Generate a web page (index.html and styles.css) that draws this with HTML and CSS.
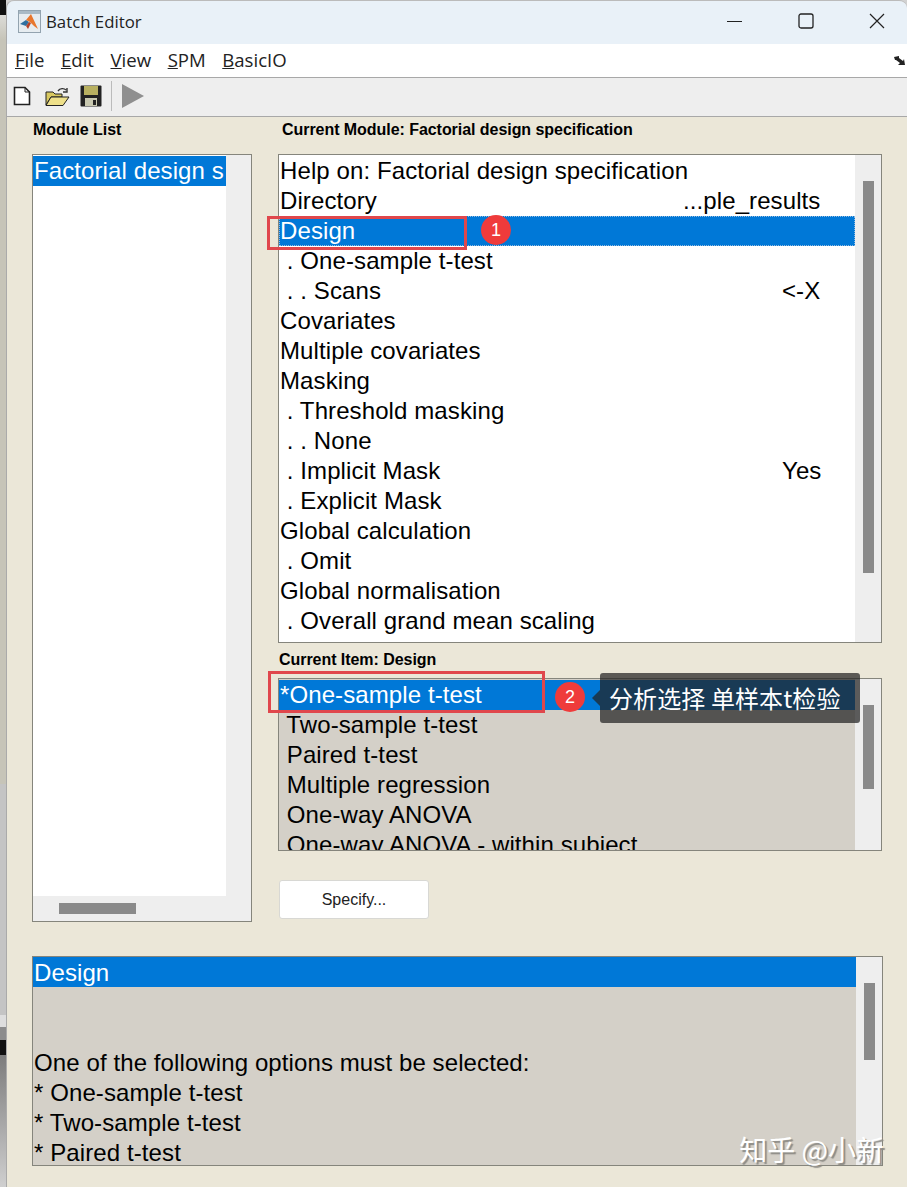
FILE: index.html
```html
<!DOCTYPE html>
<html lang="en">
<head>
  <meta charset="UTF-8">
  <meta name="viewport" content="width=device-width, initial-scale=1.0">
  <title>Batch Editor</title>
  <link rel="stylesheet" href="styles.css">
</head>
<body>
  <div class="strip"></div>
  <div class="window">
    <div class="titlebar">
      <svg class="logo" width="23" height="23" viewBox="0 0 23 23">
        <rect x="0.5" y="0.5" width="22" height="22" fill="#e6ecf0" stroke="#93a3af"/>
        <rect x="1" y="1" width="21" height="3" fill="#a9bac6"/>
        <path d="M2 14 L8 10 L11 12 L8 16 Z" fill="#2f6f9f"/>
        <path d="M8 10 L13 4 L20 19 L16 16 L12 12 Z" fill="#e8772e"/>
        <path d="M8 16 L11 12 L13 13 L10 19 Z" fill="#b5432a"/>
      </svg>
      <span class="title">Batch Editor</span>
      <div class="win-btns">
        <svg width="16" height="16" viewBox="0 0 16 16"><path d="M0 8.5 H15" stroke="#222" fill="none"/></svg>
        <svg width="16" height="16" viewBox="0 0 16 16"><rect x="1" y="1" width="14" height="14" rx="2" stroke="#222" stroke-width="1.3" fill="none"/></svg>
        <svg width="16" height="16" viewBox="0 0 16 16"><path d="M1 1 L15 15 M15 1 L1 15" stroke="#222" stroke-width="1.2" fill="none"/></svg>
      </div>
    </div>

    <div class="menubar">
      <span><u>F</u>ile</span>
      <span><u>E</u>dit</span>
      <span><u>V</u>iew</span>
      <span><u>S</u>PM</span>
      <span><u>B</u>asicIO</span>
      <svg class="menu-arrow" width="11" height="10" viewBox="0 0 11 10"><path d="M0 1 L5 0 L5 2 L9 5 L10 3 L11 9 L4 9 L6 7 L2 4 L1 4 Z" fill="#222"/></svg>
    </div>

    <div class="toolbar">
      <svg width="18" height="20" viewBox="0 0 18 20"><path d="M1.5 1.5 H12 L16.5 6 V18.5 H1.5 Z" fill="#fff" stroke="#222" stroke-width="1.6"/><path d="M12 1.5 V6 H16.5" fill="none" stroke="#222"/></svg>
      <svg class="tool-open" width="25" height="21" viewBox="0 0 25 21"><path d="M1 6 H8 L10 8 H17 V11 H6 L1 19 Z" fill="#d8c860" stroke="#222"/><path d="M6 11 H24 L18 19.5 H1 Z" fill="#eee08a" stroke="#222"/><path d="M13 5 C15 2 19 2 21 4 M18 6 L22 6 L22 2" fill="none" stroke="#333" stroke-width="1.4"/></svg>
      <svg width="22" height="22" viewBox="0 0 22 22"><rect x="0.5" y="0.5" width="21" height="21" rx="1" fill="#222"/><rect x="4" y="1" width="14" height="9" fill="#b8b060"/><rect x="5" y="13" width="12" height="8" fill="#c8c8b0"/><rect x="13" y="15" width="3" height="5" fill="#222"/></svg>
      <span class="tool-sep"></span>
      <svg width="23" height="26" viewBox="0 0 23 26"><path d="M0 1 L22 13 L0 25 Z" fill="#8f8f8f"/></svg>
    </div>

    <div class="main">
      <div class="top-row">
        <div class="col-left">
          <div class="label label-list">Module List</div>
          <div class="box module-box">
            <div class="module-inner">
              <div class="row selected">Factorial design s</div>
            </div>
            <div class="hbar"><div class="hthumb"></div></div>
          </div>
        </div>

        <div class="col-right">
          <div class="label label-module">Current Module: Factorial design specification</div>
          <div class="box module-items">
            <div class="items">
              <div class="row">Help on: Factorial design specification</div>
              <div class="row"><span>Directory</span><span class="val">...ple_results</span></div>
              <div class="row selected focus">Design</div>
              <div class="row"> . One-sample t-test</div>
              <div class="row"><span> . . Scans</span><span class="val short">&lt;-X</span></div>
              <div class="row">Covariates</div>
              <div class="row">Multiple covariates</div>
              <div class="row">Masking</div>
              <div class="row"> . Threshold masking</div>
              <div class="row"> . . None</div>
              <div class="row"><span> . Implicit Mask</span><span class="val short">Yes</span></div>
              <div class="row"> . Explicit Mask</div>
              <div class="row">Global calculation</div>
              <div class="row"> . Omit</div>
              <div class="row">Global normalisation</div>
              <div class="row"> . Overall grand mean scaling</div>
            </div>
            <div class="vbar"><div class="vthumb thumb-items"></div></div>
            <div class="mark mark-one"></div>
            <div class="badge badge-one">1</div>
          </div>

          <div class="label label-item">Current Item: Design</div>
          <div class="box item-box">
            <div class="items gray">
              <div class="row selected">*One-sample t-test</div>
              <div class="row"> Two-sample t-test</div>
              <div class="row"> Paired t-test</div>
              <div class="row"> Multiple regression</div>
              <div class="row"> One-way ANOVA</div>
              <div class="row"> One-way ANOVA - within subject</div>
            </div>
            <div class="vbar"><div class="vthumb thumb-item"></div></div>
            <div class="mark mark-two"></div>
            <div class="badge badge-two">2</div>
            <div class="tip">分析选择 单样本t检验</div>
          </div>

          <div class="btn">Specify...</div>
        </div>
      </div>

      <div class="box help-box">
        <div class="items gray">
          <div class="row selected">Design</div>
          <div class="row"></div>
          <div class="row"></div>
          <div class="row">One of the following options must be selected:</div>
          <div class="row">* One-sample t-test</div>
          <div class="row">* Two-sample t-test</div>
          <div class="row">* Paired t-test</div>
        </div>
        <div class="vbar"><div class="vthumb thumb-help"></div></div>
        <div class="watermark">知乎 @小新</div>
      </div>
    </div>
  </div>
</body>
</html>
```

FILE: styles.css
```css
html, body { margin: 0; padding: 0; }
body { width: 907px; height: 1187px; overflow: hidden; display: flex; background: #d2d2d2; font-family: "Liberation Sans", Arial, sans-serif; color: #000; }

/* bit of the desktop showing left of the window */
.strip { width: 6px; flex: none; background: linear-gradient(to bottom, #111 0, #111 15px, #dcdcd8 15px, #c6c4b8 40px, #c6c4b8 784px, #c4c4c4 784px, #c4c4c4 1015px, #dedede 1015px, #dedede 1027px, #8c8c8c 1027px, #8c8c8c 1040px, #111 1040px, #111 1055px, #7c7c7c 1055px, #cfcfcf 1187px); }

.window { flex: 1; min-width: 0; display: flex; flex-direction: column; border-radius: 8px 8px 0 0; overflow: hidden; border-top: 1px solid #bbb; border-left: 1px solid #aaa; }

.titlebar { height: 43px; flex: none; background: #e9f1f8; display: flex; align-items: center; padding: 0 0 3px 11px; box-sizing: border-box; }
.logo { margin-right: 5px; }
.title { font-family: "Open Sans", sans-serif; font-size: 16.8px; color: #222; }
.win-btns { margin-left: auto; display: flex; align-items: center; gap: 55px; padding-right: 22px; }

.menubar { height: 34px; flex: none; background: #fff; border-bottom: 1px solid #a8a8a8; display: flex; align-items: center; gap: 16.5px; padding: 0 0 2px 8px; box-sizing: border-box; font-family: "Open Sans", sans-serif; font-size: 18.6px; color: #222; position: relative; }
.menu-arrow { position: absolute; right: 2px; top: 12px; }

.toolbar { height: 39px; flex: none; background: #eee; border-bottom: 1px solid #a8a8a8; display: flex; align-items: center; padding: 0 0 2px 6px; box-sizing: border-box; gap: 10px; }
.tool-open { margin-left: 4px; }
.tool-sep { width: 1px; height: 30px; background: #bbb; margin-left: -1px; }

.main { flex: 1; background: #ebe7d8; padding: 0 24px 0 25px; }
.top-row { display: flex; gap: 26px; }
.col-left { width: 220px; flex: none; }
.col-right { width: 604px; flex: none; }

.label { font-size: 16px; font-weight: bold; height: 37px; padding-top: 4px; box-sizing: border-box; line-height: 18px; letter-spacing: -0.05px; }
.label-list { padding-left: 1px; }
.label-module { padding-left: 4px; }
.label-item { height: 35px; padding: 8px 0 0 1px; }

.box { border: 1px solid #85857c; box-sizing: border-box; display: flex; position: relative; background: #eee; }
.row { height: 30px; line-height: 30px; font-size: 24px; letter-spacing: 0.1px; white-space: pre; padding-left: 1px; display: flex; justify-content: space-between; }
.row.selected { background: #0078d7; color: #fff; }
.row.focus { outline: 1px dotted #8fb9e0; outline-offset: -1px; }
.val { width: 140px; padding-right: 32px; }
.val.short { width: 41px; }

.module-box { height: 768px; flex-direction: column; }
.module-inner { flex: 1; width: 193px; background: #fff; overflow: hidden; padding-top: 1px; }
.hbar { height: 25px; flex: none; padding: 7px 0 0 26px; box-sizing: border-box; }
.hthumb { width: 77px; height: 11px; background: #8a8a8a; }

.module-items { height: 489px; }
.items { flex: 1; background: #fff; overflow: hidden; padding-top: 1px; }
.items.gray { background: #d4d0c8; }
.vbar { width: 26px; flex: none; padding-left: 8px; box-sizing: border-box; }
.vthumb { width: 11px; background: #8a8a8a; }
.thumb-items { height: 392px; margin-top: 26px; }
.thumb-item { height: 84px; margin-top: 26px; }
.thumb-help { height: 77px; margin-top: 26px; }

.item-box { height: 173px; }
.btn { width: 150px; height: 39px; margin-top: 29px; margin-left: 1px; background: #fff; border: 1px solid #d8d8d4; border-radius: 3px; box-sizing: border-box; text-align: center; line-height: 38px; font-size: 16px; color: #222; }

.help-box { height: 210px; margin-top: 34px; width: 851px; }
.help-box .items { padding-top: 0; }
.help-box .row { line-height: 32px; }

/* annotations on top of the lists */
.mark { position: absolute; border: 3px solid #e0474c; box-sizing: border-box; }
.mark-one { left: -12px; top: 61px; width: 200px; height: 34px; }
.mark-two { left: -11px; top: -8px; width: 277px; height: 42px; }
.badge { position: absolute; width: 30px; height: 30px; border-radius: 50%; background: #ef3b3b; color: #fff; font-size: 18px; line-height: 30px; text-align: center; }
.badge-one { left: 202px; top: 60px; }
.badge-two { left: 276px; top: 3px; }
.tip { position: absolute; left: 321px; top: -6px; width: 260px; height: 50px; box-sizing: border-box; background: rgba(35, 35, 35, 0.72); border-radius: 3px; color: #fff; font-family: "Noto Sans CJK SC", sans-serif; font-size: 24px; letter-spacing: 0.1px; line-height: 50px; padding-left: 9px; white-space: nowrap; }
.tip::before { content: ""; position: absolute; left: -8px; top: 17px; border: 8px solid transparent; border-left: 0; border-right-color: rgba(35, 35, 35, 0.72); }
.watermark { position: absolute; right: -2px; bottom: -2px; font-family: "Noto Sans CJK SC", sans-serif; font-size: 28px; line-height: 36px; color: #fff; text-shadow: 2px 2px 1px #8d8b85; white-space: nowrap; }
```
